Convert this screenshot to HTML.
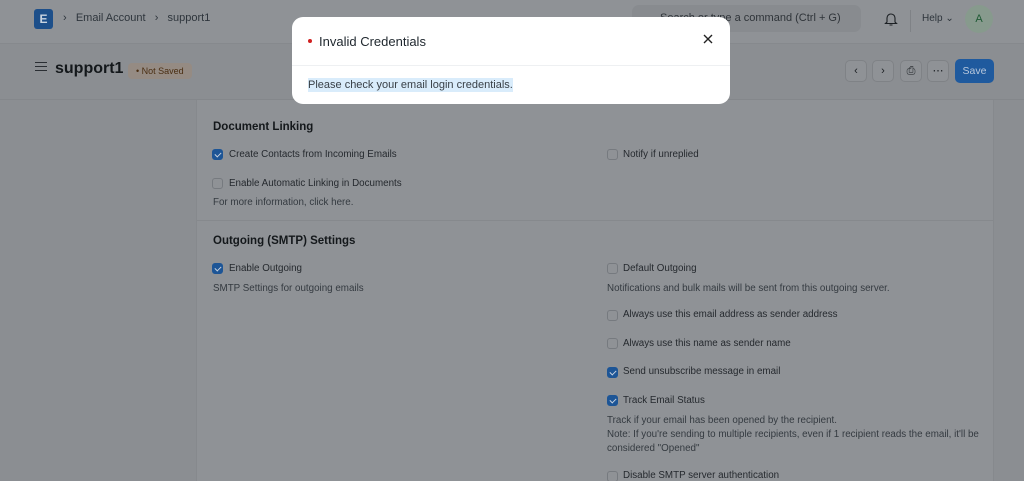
<!DOCTYPE html>
<html><head><meta charset="utf-8"><style>
*{box-sizing:border-box;margin:0;padding:0}
html,body{width:1024px;height:481px;overflow:hidden}
body{font-family:"Liberation Sans",sans-serif;background:#8b8e92;position:relative;color:#14181b}
.nav{position:absolute;left:0;top:0;width:1024px;height:44px;background:#8f9296;border-bottom:1px solid #86898d}
.logo{position:absolute;left:34px;top:9px;width:19px;height:20px;background:#1d4f8a;border-radius:3px;color:#c8d3e0;font-size:12px;font-weight:bold;text-align:center;line-height:20px}
.bc{position:absolute;top:12px;font-size:11px;color:#2e353c}
.search{position:absolute;left:632px;top:5px;width:229px;height:27px;background:#888b8f;border-radius:7px;font-size:11px;color:#2f3439;padding:7px 0 0 28px}
.ph{position:absolute;left:0;top:44px;width:1024px;height:56px;background:#8b8e92;border-bottom:1px solid #84878b}
.card{position:absolute;left:196px;top:100px;width:798px;height:381px;background:#8f9296;border-left:1px solid #86898d;border-right:1px solid #86898d}
.h{position:absolute;font-size:11.5px;font-weight:bold;color:#14181b}
.t{position:absolute;font-size:9.8px;color:#25292e;white-space:nowrap}
.d{position:absolute;font-size:9.8px;color:#343a40;line-height:14px;white-space:nowrap}
.cb{position:absolute;width:11px;height:11px;border:1px solid #767a7f;border-radius:3px;background:#8f9296}
.cb.on{background:#1d5596;border-color:#1d5596}
.cb.on:after{content:"";position:absolute;left:3px;top:1px;width:3px;height:5px;border:solid #c8d3e0;border-width:0 1.3px 1.3px 0;transform:rotate(45deg)}
.btn{position:absolute;top:60px;width:22px;height:22px;border:1px solid #7f8286;border-radius:5px;background:#8f9296;font-size:11px;text-align:center;line-height:20px;color:#1c2024}
.modal{position:absolute;left:292px;top:17px;width:438px;height:87px;background:#fff;border-radius:11px;z-index:6}
</style></head><body>
<div class="nav">
<div class="logo">E</div>
<div class="bc" style="left:63px">›&nbsp;&nbsp; Email Account &nbsp;&nbsp;›&nbsp;&nbsp; support1</div>
<div class="search">Search or type a command (Ctrl + G)</div>
<svg style="position:absolute;left:884px;top:11px" width="14" height="16" viewBox="0 0 14 16"><path d="M3 11V7a4 4 0 018 0v4l1.5 1.5h-11z M5.5 14h3" fill="none" stroke="#1c2024" stroke-width="1.1"/></svg>
<div style="position:absolute;left:910px;top:10px;width:1px;height:22px;background:#7f8286"></div>
<div class="bc" style="left:922px;top:13px;font-size:10px">Help ⌄</div>
<div style="position:absolute;left:965px;top:5px;width:28px;height:28px;border-radius:50%;background:#879a8d;color:#1f5a35;font-size:11px;text-align:center;line-height:28px">A</div>
</div>
<div class="ph">
<div style="position:absolute;left:35px;top:22px;width:12px;height:1.3px;background:#2a2e33;box-shadow:0 -4px 0 #2a2e33,0 4px 0 #2a2e33"></div>
<div style="position:absolute;left:55px;top:16px;font-size:16px;font-weight:bold">support1</div>
<div style="position:absolute;left:128px;top:19px;height:16px;padding:0 8px;background:#958b83;border-radius:4px;font-size:9px;color:#4a2e12;line-height:16px">• Not Saved</div>
</div>
<div class="btn" style="left:845px">‹</div>
<div class="btn" style="left:872px">›</div>
<div class="btn" style="left:900px">⎙</div>
<div class="btn" style="left:927px">⋯</div>
<div style="position:absolute;left:955px;top:59px;width:39px;height:24px;background:#1f5a9e;border-radius:5px;color:#b8c8dc;font-size:10.5px;text-align:center;line-height:24px">Save</div>
<div class="card"></div>
<div class="h" style="left:213px;top:121px">Document Linking</div>
<div class="cb on" style="left:212px;top:149px"></div><div class="t" style="left:229px;top:149px">Create Contacts from Incoming Emails</div>
<div class="cb" style="left:607px;top:149px"></div><div class="t" style="left:623px;top:149px">Notify if unreplied</div>
<div class="cb" style="left:212px;top:178px"></div><div class="t" style="left:229px;top:178px">Enable Automatic Linking in Documents</div>
<div class="d" style="left:213px;top:196px">For more information, click here.</div>
<div style="position:absolute;left:197px;top:220px;width:796px;height:1px;background:#86898d"></div>
<div class="h" style="left:213px;top:235px">Outgoing (SMTP) Settings</div>
<div class="cb on" style="left:212px;top:263px"></div><div class="t" style="left:229px;top:263px">Enable Outgoing</div>
<div class="d" style="left:213px;top:282px">SMTP Settings for outgoing emails</div>
<div class="cb" style="left:607px;top:263px"></div><div class="t" style="left:623px;top:263px">Default Outgoing</div>
<div class="d" style="left:607px;top:282px">Notifications and bulk mails will be sent from this outgoing server.</div>
<div class="cb" style="left:607px;top:310px"></div><div class="t" style="left:623px;top:309px">Always use this email address as sender address</div>
<div class="cb" style="left:607px;top:338px"></div><div class="t" style="left:623px;top:338px">Always use this name as sender name</div>
<div class="cb on" style="left:607px;top:367px"></div><div class="t" style="left:623px;top:366px">Send unsubscribe message in email</div>
<div class="cb on" style="left:607px;top:395px"></div><div class="t" style="left:623px;top:395px">Track Email Status</div>
<div class="d" style="left:607px;top:414px">Track if your email has been opened by the recipient.<br>Note: If you're sending to multiple recipients, even if 1 recipient reads the email, it'll be<br>considered "Opened"</div>
<div class="cb" style="left:607px;top:471px"></div><div class="t" style="left:623px;top:470px">Disable SMTP server authentication</div>
<div class="modal">
<div style="position:absolute;left:16px;top:22px;width:4px;height:4px;border-radius:50%;background:#d02020"></div>
<div style="position:absolute;left:27px;top:17px;font-size:13px;color:#1f272e">Invalid Credentials</div>
<svg style="position:absolute;left:411px;top:17px" width="10" height="10" viewBox="0 0 10 10"><path d="M1 1L9 9M9 1L1 9" stroke="#222" stroke-width="1.4"/></svg>
<div style="position:absolute;left:0;top:48px;width:438px;height:1px;background:#eef0f2"></div>
<div style="position:absolute;left:16px;top:61px;font-size:11px;color:#383f46;background:#d9ecfb;padding:1px 0">Please check your email login credentials.</div>
</div>
</body></html>
